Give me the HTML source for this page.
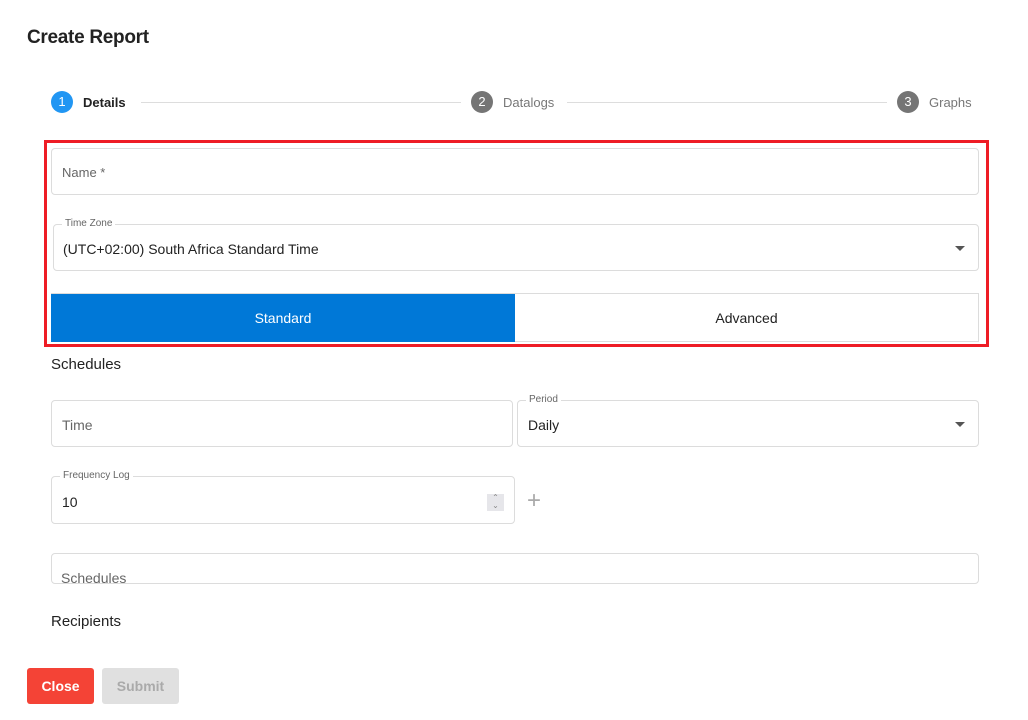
<!DOCTYPE html><html><head><style>
*{box-sizing:border-box}body{margin:0;width:1028px;height:720px;background:#fff;font-family:"Liberation Sans",sans-serif;position:relative;overflow:hidden;color:#222}
.a{position:absolute}
.f{position:absolute;border:1px solid #dcdcdc;border-radius:4px;background:#fff}
.lbl{position:absolute;font-size:10px;color:#666;background:#fff;padding:0 3px;top:-7px;left:8px}
.ph{position:absolute;font-size:14px;color:#666}
.v{position:absolute;font-size:14px;color:#222}
.arr{position:absolute;width:0;height:0;border-left:5px solid transparent;border-right:5px solid transparent;border-top:5px solid #555}
.c{position:absolute;width:22px;height:22px;border-radius:50%;color:#fff;font-size:13px;text-align:center;line-height:22px}
</style></head><body>
<div class="a" style="left:27px;top:27px;font-size:19px;color:#222;font-weight:bold;letter-spacing:-0.3px">Create Report</div>
<div class="c" style="left:51px;top:91px;background:#2196f3">1</div>
<div class="a" style="left:83px;top:95px;font-size:13px;font-weight:bold">Details</div>
<div class="a" style="left:141px;top:102px;width:320px;height:1px;background:#ddd"></div>
<div class="c" style="left:471px;top:91px;background:#757575">2</div>
<div class="a" style="left:503px;top:95px;font-size:13px;color:#777">Datalogs</div>
<div class="a" style="left:567px;top:102px;width:320px;height:1px;background:#ddd"></div>
<div class="c" style="left:897px;top:91px;background:#757575">3</div>
<div class="a" style="left:929px;top:95px;font-size:13px;color:#777">Graphs</div>
<div class="a" style="left:44px;top:140px;width:945px;height:207px;border:3px solid #ee1c25"></div>
<div class="f" style="left:51px;top:148px;width:928px;height:47px"><span class="ph" style="left:10px;top:16px;font-size:13px">Name *</span></div>
<div class="f" style="left:53px;top:224px;width:926px;height:47px"><span class="lbl">Time Zone</span><span class="v" style="left:9px;top:16px">(UTC+02:00) South Africa Standard Time</span><span class="arr" style="right:13px;top:21px"></span></div>
<div class="a" style="left:51px;top:293px;width:928px;height:49px;border:1px solid #dcdcdc"></div>
<div class="a" style="left:51px;top:294px;width:464px;height:48px;background:#0078d7;color:#fff;font-size:14px;text-align:center;line-height:48px">Standard</div>
<div class="a" style="left:515px;top:294px;width:463px;height:48px;color:#222;font-size:14px;text-align:center;line-height:48px">Advanced</div>
<div class="a" style="left:51px;top:356px;font-size:15px">Schedules</div>
<div class="f" style="left:51px;top:400px;width:462px;height:47px"><span class="ph" style="left:10px;top:16px">Time</span></div>
<div class="f" style="left:517px;top:400px;width:462px;height:47px"><span class="lbl">Period</span><span class="v" style="left:10px;top:16px">Daily</span><span class="arr" style="right:13px;top:21px"></span></div>
<div class="f" style="left:51px;top:476px;width:464px;height:48px"><span class="lbl">Frequency Log</span><span class="v" style="left:10px;top:17px">10</span><span class="a" style="right:10px;top:17px;width:17px;height:17px;background:#e6e6ea;font-size:8px;color:#888;text-align:center;line-height:8px">⌃<br>⌄</span></div>
<div class="a" style="left:527px;top:487px;font-size:24px;color:#aaa;font-weight:300">+</div>
<div class="f" style="left:51px;top:553px;width:928px;height:31px;overflow:hidden"><span class="ph" style="left:9px;top:16px">Schedules</span></div>
<div class="a" style="left:51px;top:613px;font-size:15px">Recipients</div>
<div class="a" style="left:27px;top:668px;width:67px;height:36px;background:#f44336;border-radius:3px;color:#fff;font-size:14px;font-weight:bold;text-align:center;line-height:36px">Close</div>
<div class="a" style="left:102px;top:668px;width:77px;height:36px;background:#e0e0e0;border-radius:3px;color:#aaa;font-size:14px;font-weight:bold;text-align:center;line-height:36px">Submit</div>
</body></html>
